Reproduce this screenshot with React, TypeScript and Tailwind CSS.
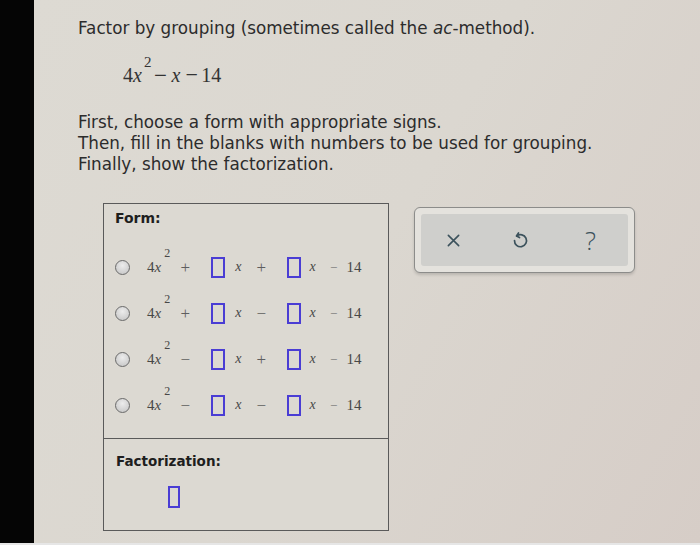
import React from "react";

const sans = { fontFamily: '"DejaVu Sans", Verdana, sans-serif' };
const serif = { fontFamily: '"Liberation Serif", "Times New Roman", serif' };

function Box({ ml }: { ml: string }) {
  return <span className={`${ml} block w-[14px] h-[21px] border-2 border-[#4a3dd4] shrink-0`} />;
}

function Radio() {
  return (
    <span className="ml-[11px] block w-[15px] h-[15px] rounded-full border-[1.5px] border-[#6a6a6a] bg-[radial-gradient(circle_at_50%_35%,#ececec,#c2c2c2)] shrink-0" />
  );
}

function Row({ s1, s2 }: { s1: string; s2: string }) {
  return (
    <div className="flex items-center h-[46px] text-[#474747]" style={serif}>
      <Radio />
      <span className="ml-[17px] text-[15px] leading-none">
        4<span className="italic">x</span>
      </span>
      <span className="ml-[3px] text-[12px] leading-none -translate-y-[14px]">2</span>
      <span className="ml-[9px] w-[12px] text-center text-[17px] leading-none text-[#5e5e5e]">{s1}</span>
      <Box ml="ml-[20px]" />
      <span className="ml-[10px] text-[14px] italic leading-none">x</span>
      <span className="ml-[14px] w-[12px] text-center text-[17px] leading-none text-[#5e5e5e]">{s2}</span>
      <Box ml="ml-[20px]" />
      <span className="ml-[8px] text-[14px] italic leading-none">x</span>
      <span className="ml-[13px] w-[10px] text-center text-[13px] leading-none text-[#777]">−</span>
      <span className="ml-[8px] text-[15px] leading-none">14</span>
    </div>
  );
}

export default function App() {
  return (
    <div className="w-[700px] h-[545px] flex flex-col bg-black overflow-hidden">
      <div className="flex flex-1 min-h-0">
        <div className="w-[34px] bg-[#050505]" />
        <div
          className="flex-1 pl-[44px] pt-[17px] text-[#2c2c2c] bg-[linear-gradient(120deg,#dddad3_0%,#dbd7d0_50%,#d6cdc7_100%)]"
          style={sans}
        >
          <p className="text-[16.8px] leading-[22px]">
            Factor by grouping (sometimes called the <span className="italic">ac</span>-method).
          </p>
          <div className="mt-[24px] ml-[45px] flex items-center h-[24px] text-[20px] text-[#333]" style={serif}>
            <span>4</span>
            <span className="italic">x</span>
            <span className="text-[15px] -translate-y-[13px] ml-[2px]">2</span>
            <span className="ml-[2px] w-[14px] text-center text-[23px] leading-none">−</span>
            <span className="italic ml-[4px]">x</span>
            <span className="ml-[5px] w-[13px] text-center text-[22px] leading-none">−</span>
            <span className="ml-[3px]">14</span>
          </div>
          <div className="mt-[25px] text-[16.8px] leading-[21px]">
            <p>First, choose a form with appropriate signs.</p>
            <p>Then, fill in the blanks with numbers to be used for grouping.</p>
            <p>Finally, show the factorization.</p>
          </div>
          <div className="flex items-start mt-[28px]">
            <div className="ml-[25px] w-[286px] border border-[#5a5a5a] bg-[#dcd9d2]">
              <div className="pl-[11px] pt-[4px] pb-[10px]">
                <div className="text-[14px] leading-[20px] font-bold text-[#1e1e1e]">Form:</div>
                <div className="mt-[16px] -ml-[11px]">
                  <Row s1="+" s2="+" />
                  <Row s1="+" s2="−" />
                  <Row s1="−" s2="+" />
                  <Row s1="−" s2="−" />
                </div>
              </div>
              <div className="border-t border-[#5a5a5a] pl-[12px] pt-[12px] pb-[22px]">
                <div className="text-[13.5px] leading-[20px] font-bold text-[#1e1e1e]">Factorization:</div>
                <span className="mt-[15px] ml-[52px] block w-[12px] h-[22px] border-2 border-[#4a3dd4]" />
              </div>
            </div>
            <div className="ml-[25px] mt-[4px] w-[221px] h-[66px] rounded-[6px] border-[1.5px] border-[#8c8c8a] bg-[#e4e2dd] p-[6px] shadow-[0_2px_3px_rgba(0,0,0,0.15)]">
              <div className="h-full rounded-[3px] bg-[#cfcfcc] flex items-center text-[#3c525c]">
                <svg className="ml-[25px] shrink-0" width="15" height="15" viewBox="0 0 16 16" fill="none" stroke="#3c525c" strokeWidth="1.7" strokeLinecap="round">
                  <path d="M2.5 2.5 L13.5 13.5 M13.5 2.5 L2.5 13.5" />
                </svg>
                <svg className="ml-[50px] shrink-0" width="18" height="20" viewBox="0 0 18 20" fill="none" stroke="#3c525c" strokeWidth="1.7" strokeLinecap="round" strokeLinejoin="round">
                  <path d="M7.5 3 L5.5 6 L8.5 7.5" />
                  <path d="M5.8 6 A6 6 0 1 1 3.5 10.5" />
                </svg>
                <span className="ml-[56px] text-[26px] leading-none font-light" style={{ fontFamily: '"Open Sans", sans-serif' }}>?</span>
              </div>
            </div>
          </div>
        </div>
      </div>
      <div className="h-[2px] bg-[#e6e6e6]" />
    </div>
  );
}
